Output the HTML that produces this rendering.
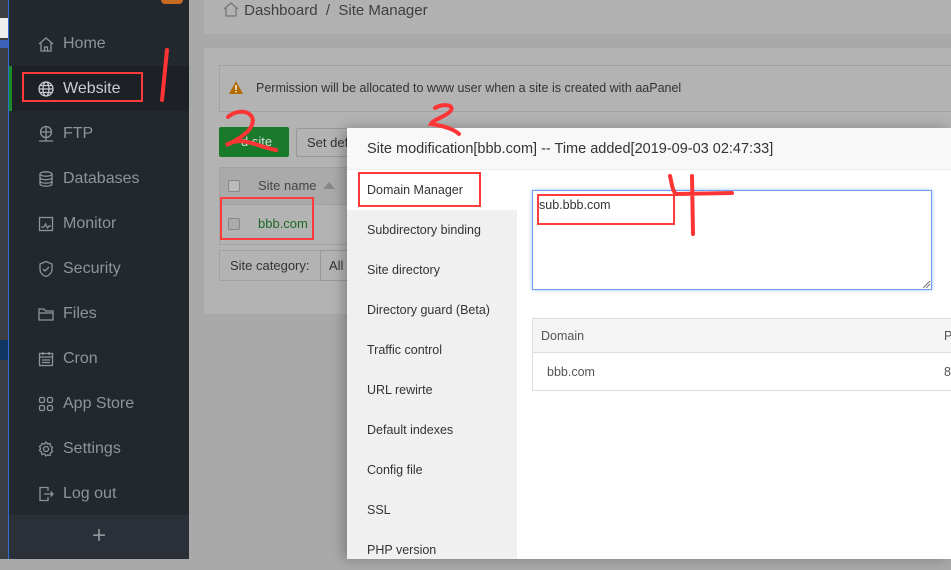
<!DOCTYPE html>
<html><head><meta charset="utf-8"><style>
*{margin:0;padding:0;box-sizing:border-box}
body{width:951px;height:559px;overflow:hidden;background:#a9a9a9;font-family:"Liberation Sans","Noto Sans CJK SC",sans-serif;position:relative}
.abs{position:absolute}
#strip{left:0;top:0;width:9px;height:559px;background:#3a3d42;border-right:1px solid #2a6fd0}
#side{left:9px;top:0;width:180px;height:559px;background:#23272e}
.item{position:absolute;left:0;width:180px;height:45px;color:#8f949b;font-size:16px;line-height:45px;padding-left:54px}
.item svg{position:absolute;left:28px;top:14px}
.act{background:#1d2025;color:#c9ccd0;border-left:3px solid #1a8a2a}
#plus{left:9px;top:515px;width:180px;height:44px;background:#2b2f37;color:#8f949b;font-size:24px;text-align:center;line-height:42px}
.red{position:absolute;border:2px solid #ff3b3b}
.rs{stroke:#ff3535;stroke-width:4;fill:none;stroke-linecap:round}
</style></head><body>
<div class="abs" id="strip"></div>
<div class="abs" style="left:0;top:18px;width:8px;height:20px;background:#eee"></div>
<div class="abs" style="left:0;top:40px;width:8px;height:8px;background:#3a62b8"></div>
<div class="abs" style="left:0;top:340px;width:8px;height:20px;background:#0f3560"></div>
<div class="abs" id="side">
 <div class="abs" style="left:152px;top:-6px;width:22px;height:10px;background:#c76a22;border-radius:4px"></div>
 <div class="item" style="top:21px"><svg width="18" height="18" viewBox="0 0 18 18" fill="none" stroke="#8f949b" stroke-width="1.3"><path d="M2 9L9 3l7 6M4 8v8h10V8"/><path d="M7.5 16v-4h3v4"/></svg>Home</div>
 <div class="item act" style="top:66px;padding-left:51px"><svg width="18" height="18" viewBox="0 0 18 18" fill="none" stroke="#c9ccd0" stroke-width="1.3" style="left:25px"><circle cx="9" cy="9" r="7"/><ellipse cx="9" cy="9" rx="3" ry="7"/><path d="M2 9h14M3 5.5h12M3 12.5h12"/></svg>Website</div>
 <div class="item" style="top:111px"><svg width="18" height="18" viewBox="0 0 18 18" fill="none" stroke="#8f949b" stroke-width="1.3"><circle cx="9" cy="7" r="5.5"/><path d="M3.5 7h11M9 1.5v11M2 16h14M9 12.5V16"/></svg>FTP</div>
 <div class="item" style="top:156px"><svg width="18" height="18" viewBox="0 0 18 18" fill="none" stroke="#8f949b" stroke-width="1.3"><ellipse cx="9" cy="4" rx="6" ry="2.2"/><path d="M3 4v10c0 1.2 2.7 2.2 6 2.2s6-1 6-2.2V4M3 7.5c0 1.2 2.7 2.2 6 2.2s6-1 6-2.2M3 11c0 1.2 2.7 2.2 6 2.2s6-1 6-2.2"/></svg>Databases</div>
 <div class="item" style="top:201px"><svg width="18" height="18" viewBox="0 0 18 18" fill="none" stroke="#8f949b" stroke-width="1.3"><rect x="2.5" y="2.5" width="13" height="13"/><path d="M4 12h3l1.5-3 2 4 1.5-2h2"/></svg>Monitor</div>
 <div class="item" style="top:246px"><svg width="18" height="18" viewBox="0 0 18 18" fill="none" stroke="#8f949b" stroke-width="1.3"><path d="M9 1.5l6 2.5v5c0 4-3 6.5-6 7.5-3-1-6-3.5-6-7.5V4z"/><path d="M6 9l2 2 4-4"/></svg>Security</div>
 <div class="item" style="top:291px"><svg width="18" height="18" viewBox="0 0 18 18" fill="none" stroke="#8f949b" stroke-width="1.3"><path d="M2 4h5l1.5 2H16v9H2z"/><path d="M2 8h14"/></svg>Files</div>
 <div class="item" style="top:336px"><svg width="18" height="18" viewBox="0 0 18 18" fill="none" stroke="#8f949b" stroke-width="1.3"><rect x="2.5" y="3.5" width="13" height="12"/><path d="M2.5 7h13M6 2v3M12 2v3M5 10h8M5 12.5h8"/></svg>Cron</div>
 <div class="item" style="top:381px"><svg width="18" height="18" viewBox="0 0 18 18" fill="none" stroke="#8f949b" stroke-width="1.3"><rect x="2.5" y="2.5" width="5" height="5" rx="1.5"/><rect x="10.5" y="2.5" width="5" height="5" rx="1.5"/><rect x="2.5" y="10.5" width="5" height="5" rx="1.5"/><rect x="10.5" y="10.5" width="5" height="5" rx="1.5"/></svg>App Store</div>
 <div class="item" style="top:426px"><svg width="18" height="18" viewBox="0 0 18 18" fill="none" stroke="#8f949b" stroke-width="1.3"><circle cx="9" cy="9" r="2.5"/><path d="M9 2l1.5 2 2.5-.5.5 2.5 2 1.5-1 2 1 2-2 1.5-.5 2.5-2.5-.5L9 16l-1.5-2-2.5.5L4.5 12l-2-1.5 1-2-1-2 2-1.5L5 3.5l2.5.5z"/></svg>Settings</div>
 <div class="item" style="top:471px"><svg width="18" height="18" viewBox="0 0 18 18" fill="none" stroke="#8f949b" stroke-width="1.3"><path d="M11 6V2.5H3v13h8V12M7 9h9M13.5 6.5L16 9l-2.5 2.5"/></svg>Log out</div>
</div>
<div class="abs" id="plus">+</div>
<div class="red" style="left:22px;top:72px;width:121px;height:30px"></div>
<svg class="abs" style="left:150px;top:40px" width="30" height="70"><path class="rs" d="M17 10L12 60"/></svg>
<!-- main -->
<div class="abs" style="left:204px;top:0;width:760px;height:34px;background:#b1b1b1"></div>
<div class="abs" style="left:222px;top:0;font-size:15px;color:#3f3f3f;line-height:18px"><svg width="18" height="18" viewBox="0 0 18 18" fill="none" stroke="#777" stroke-width="1.3" style="vertical-align:-3px"><path d="M2 9L9 3l7 6M4 8v8h10V8"/></svg> Dashboard &nbsp;/&nbsp; Site Manager</div>
<div class="abs" style="left:204px;top:48px;width:760px;height:266px;background:#b3b3b3"></div>
<div class="abs" style="left:219px;top:65px;width:740px;height:47px;border:1px solid #a2a2a2;background:#b3b3b3;font-size:12.5px;color:#333;line-height:45px;padding-left:36px">Permission will be allocated to www user when a site is created with aaPanel</div>
<svg class="abs" style="left:229px;top:81px" width="14" height="13"><path d="M7 0L14 13H0z" fill="#b36b00"/><rect x="6.3" y="4" width="1.4" height="5" fill="#fff"/><rect x="6.3" y="10" width="1.4" height="1.4" fill="#fff"/></svg>
<div class="abs" style="left:219px;top:127px;width:70px;height:30px;background:#1a7a2c;border-radius:2px;color:#ddd;font-size:13px;line-height:30px;padding-left:22px">d site</div>
<div class="abs" style="left:296px;top:128px;width:60px;height:29px;border:1px solid #999;border-radius:2px;color:#333;font-size:13px;line-height:27px;padding-left:10px">Set def</div>
<div class="abs" style="left:219px;top:167px;width:140px;height:38px;background:#aaa;border:1px solid #a2a2a2"></div>
<div class="abs" style="left:219px;top:205px;width:140px;height:40px;background:#b3b3b3;border:1px solid #a2a2a2;border-top:none"></div>
<div class="abs" style="left:228px;top:180px;width:12px;height:12px;border:1px solid #888;border-radius:2px;background:#bbb"></div>
<div class="abs" style="left:258px;top:178px;font-size:13px;color:#444">Site name</div>
<svg class="abs" style="left:323px;top:182px" width="12" height="7"><path d="M0 7L6 0l6 7z" fill="#888"/></svg>
<div class="abs" style="left:228px;top:218px;width:12px;height:12px;border:1px solid #888;border-radius:2px;background:#aaa"></div>
<div class="abs" style="left:258px;top:216px;font-size:13px;color:#1e6a25">bbb.com</div>
<div class="red" style="left:220px;top:197px;width:94px;height:43px"></div>
<div class="abs" style="left:219px;top:250px;width:140px;height:31px;border:1px solid #a2a2a2;font-size:13px;color:#333;line-height:29px;padding-left:10px">Site category:</div>
<div class="abs" style="left:320px;top:250px;width:40px;height:31px;border:1px solid #999;font-size:13px;line-height:29px;padding-left:8px;color:#333">All</div>
<svg class="abs" style="left:222px;top:105px" width="60" height="50"><path class="rs" d="M6 12C20 0 40 10 26 26 20 32 10 38 4 40 20 30 36 42 54 45"/></svg>
<!-- modal -->
<div class="abs" style="left:347px;top:128px;width:604px;height:431px;background:#fff;box-shadow:-4px 0 12px rgba(0,0,0,.25)"></div>
<div class="abs" style="left:347px;top:128px;width:604px;height:42px;background:#f8f8f8;border-bottom:1px solid #eee;font-size:14.5px;color:#333;line-height:42px;padding-left:20px">Site modification[bbb.com] -- Time added[2019-09-03 02:47:33]</div>
<div class="abs" style="left:347px;top:210px;width:170px;height:349px;background:#f0f0f0"></div>
<div class="abs" style="left:367px;top:0;font-size:12.5px;color:#333;line-height:40px">
<div style="position:absolute;top:170px;white-space:nowrap">Domain Manager</div>
<div style="position:absolute;top:210px;white-space:nowrap">Subdirectory binding</div>
<div style="position:absolute;top:250px;white-space:nowrap">Site directory</div>
<div style="position:absolute;top:290px;white-space:nowrap">Directory guard (Beta)</div>
<div style="position:absolute;top:330px;white-space:nowrap">Traffic control</div>
<div style="position:absolute;top:370px;white-space:nowrap">URL rewirte</div>
<div style="position:absolute;top:410px;white-space:nowrap">Default indexes</div>
<div style="position:absolute;top:450px;white-space:nowrap">Config file</div>
<div style="position:absolute;top:490px;white-space:nowrap">SSL</div>
<div style="position:absolute;top:530px;white-space:nowrap">PHP version</div>
</div>
<div class="red" style="left:358px;top:172px;width:123px;height:35px"></div>
<svg class="abs" style="left:415px;top:100px" width="60" height="45"><path class="rs" d="M20 8C30 2 44 6 32 14 26 18 18 20 16 24 30 26 40 30 44 34"/></svg>
<div class="abs" style="left:532px;top:190px;width:400px;height:100px;border:1px solid #6aa0ef;box-shadow:0 0 4px #9cc2f5;font-size:12.5px;color:#333;padding:7px 4px"><span style="margin-left:2px">sub.bbb.com</span></div>
<svg class="abs" style="left:921px;top:279px" width="10" height="10"><path d="M2 9L9 2M5 9L9 5" stroke="#777" stroke-width="1"/></svg>
<div class="red" style="left:537px;top:194px;width:138px;height:31px"></div>
<svg class="abs" style="left:660px;top:170px" width="80" height="72"><path class="rs" d="M10 6C12 14 12 20 16 24L72 23M32 6L33 64"/></svg>
<div class="abs" style="left:532px;top:318px;width:430px;height:73px;border:1px solid #ddd"></div>
<div class="abs" style="left:533px;top:319px;width:430px;height:34px;background:#f5f5f5;border-bottom:1px solid #ddd;font-size:12.5px;color:#555;line-height:34px;padding-left:8px">Domain<span style="position:absolute;left:411px">P</span></div>
<div class="abs" style="left:547px;top:355px;width:420px;font-size:12.5px;color:#555;line-height:34px">bbb.com<span style="position:absolute;left:397px">8</span></div>
</body></html>
